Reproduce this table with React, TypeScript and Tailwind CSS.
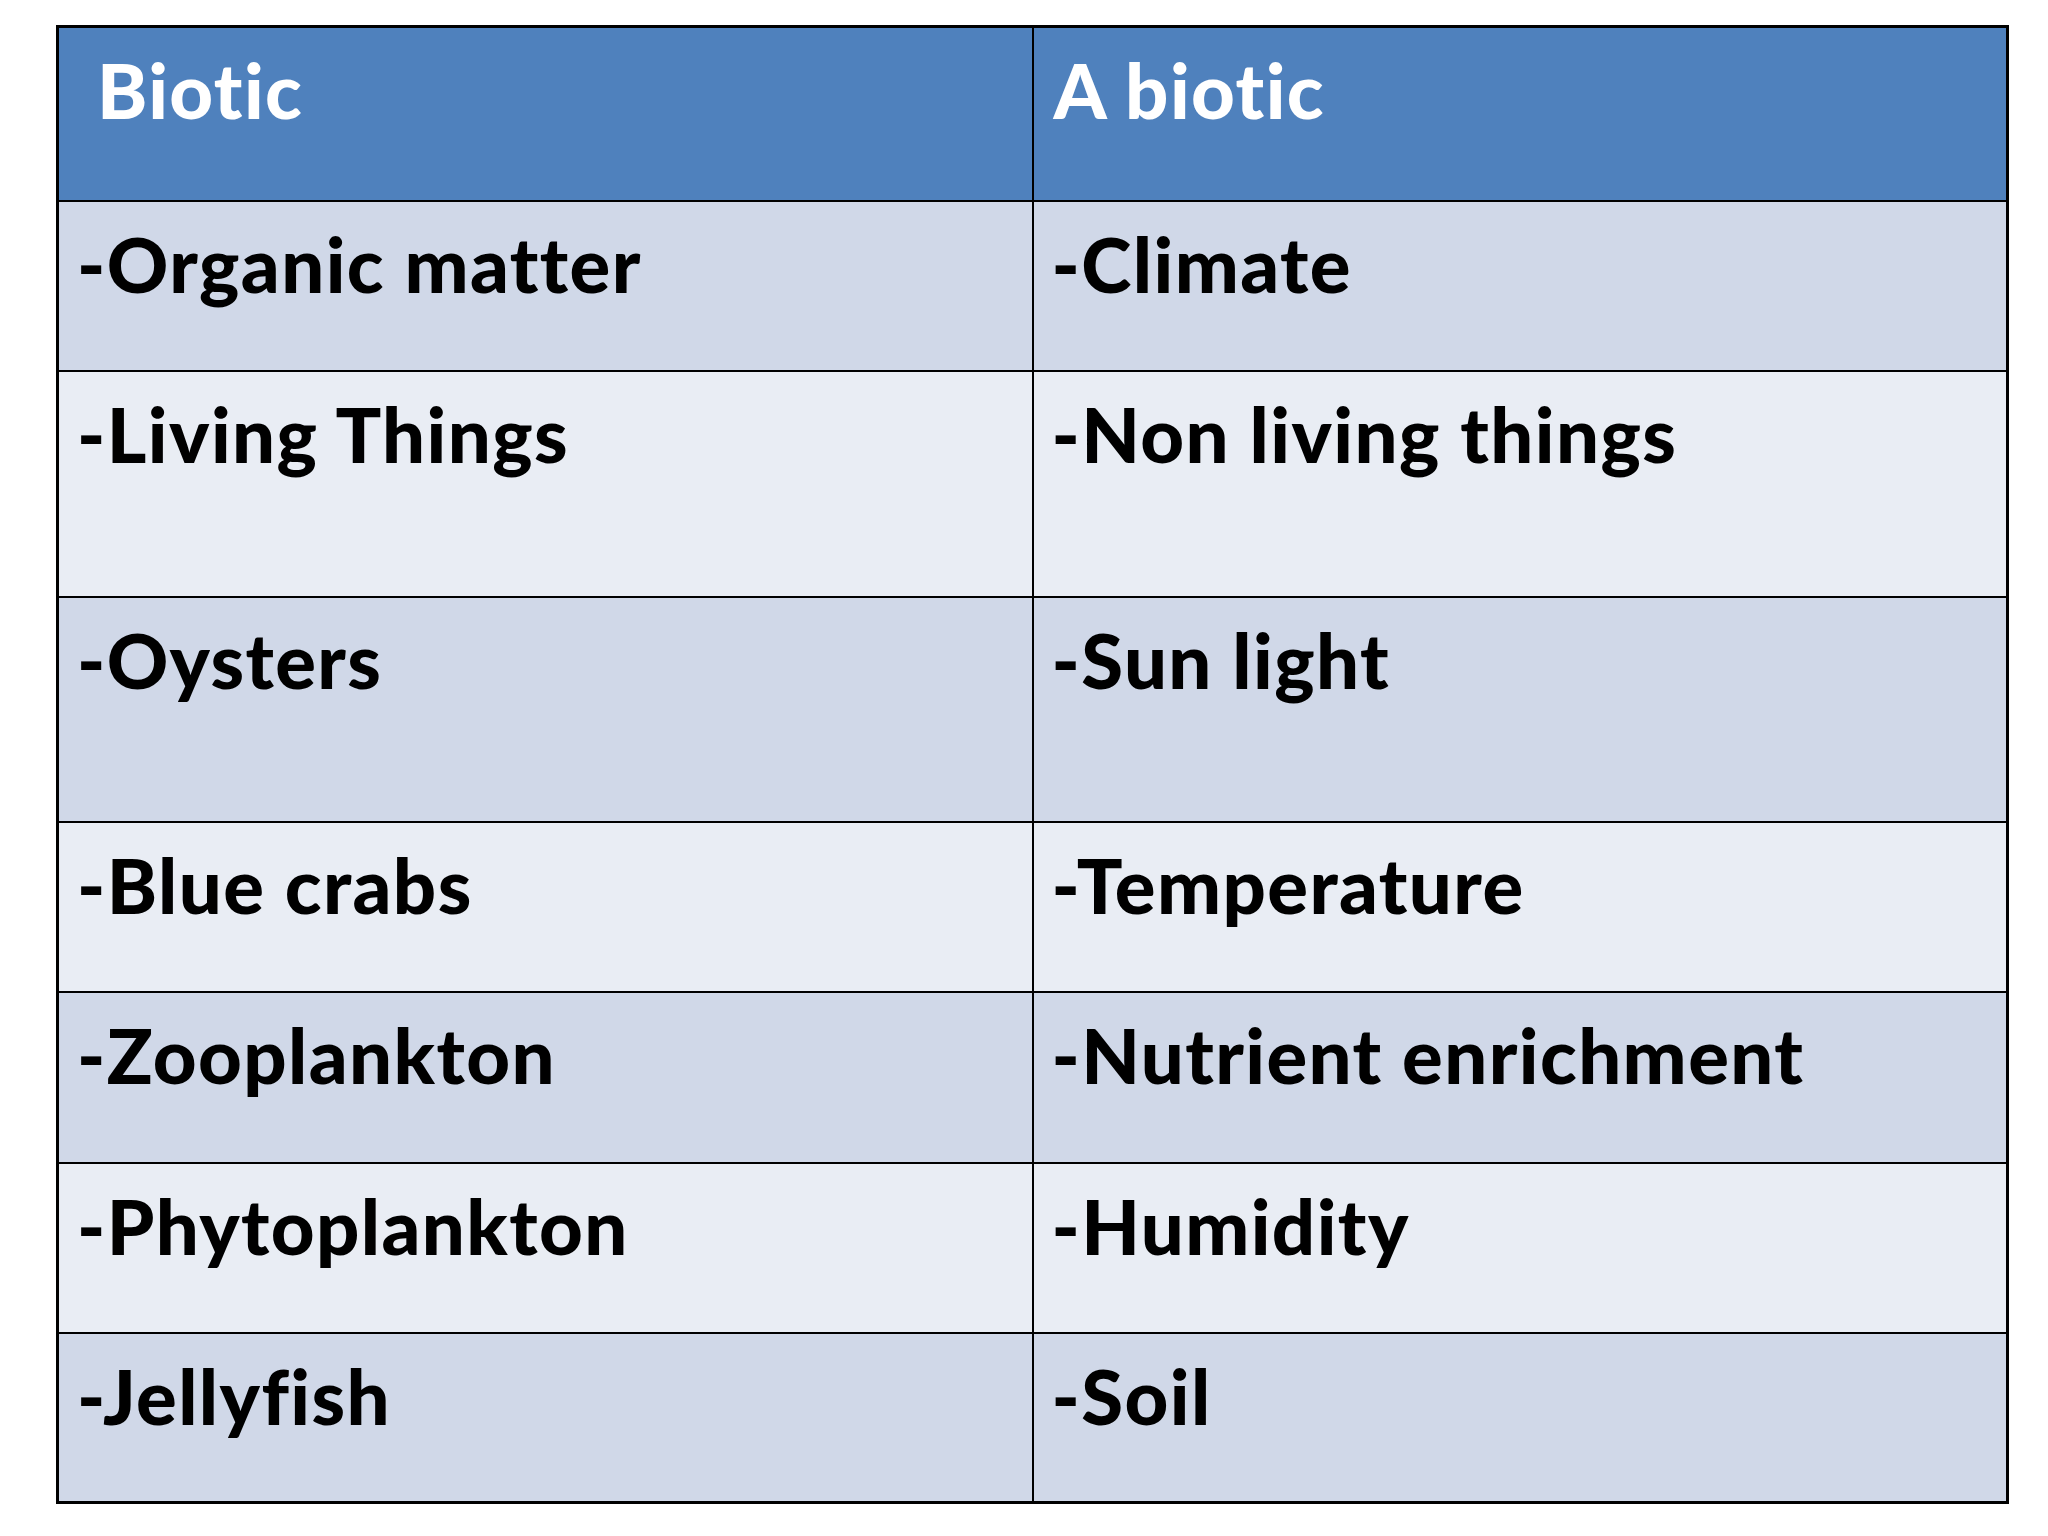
import React from "react";

const rows: [string, string][] = [
  ["-Organic matter", "-Climate"],
  ["-Living Things", "-Non living things"],
  ["-Oysters", "-Sun light"],
  ["-Blue crabs", "-Temperature"],
  ["-Zooplankton", "-Nutrient enrichment"],
  ["-Phytoplankton", "-Humidity"],
  ["-Jellyfish", "-Soil"],
];

// alturas de cada fila (px), medidas sobre la captura
const heights = ["h-[170px]", "h-[226px]", "h-[225px]", "h-[170px]", "h-[171px]", "h-[170px]", "h-[170px]"];

const cell =
  "border-2 border-black align-top text-left pt-[24px] text-[76px] leading-none font-black tracking-[1.4px] [font-variant-ligatures:none]";

export default function App() {
  return (
    <div className="w-[2048px] h-[1536px] bg-white pt-[25px] pl-[56px] font-['Lato',sans-serif]">
      <table className="w-[1953px] border-collapse border-[3px] border-black table-fixed">
        <thead>
          <tr className="h-[174px] bg-[#4f81bd]">
            <th className={`w-1/2 pl-[38px] text-white ${cell}`}>Biotic</th>
            <th className={`w-1/2 pl-[20px] text-white ${cell}`}>A biotic</th>
          </tr>
        </thead>
        <tbody>
          {rows.map(([a, b], i) => (
            <tr key={a} className={`${heights[i]} ${i % 2 === 0 ? "bg-[#d0d8e8]" : "bg-[#e9edf4]"}`}>
              <td className={`pl-[18px] text-black ${cell}`}>{a}</td>
              <td className={`pl-[18px] text-black ${cell}`}>{b}</td>
            </tr>
          ))}
        </tbody>
      </table>
    </div>
  );
}
